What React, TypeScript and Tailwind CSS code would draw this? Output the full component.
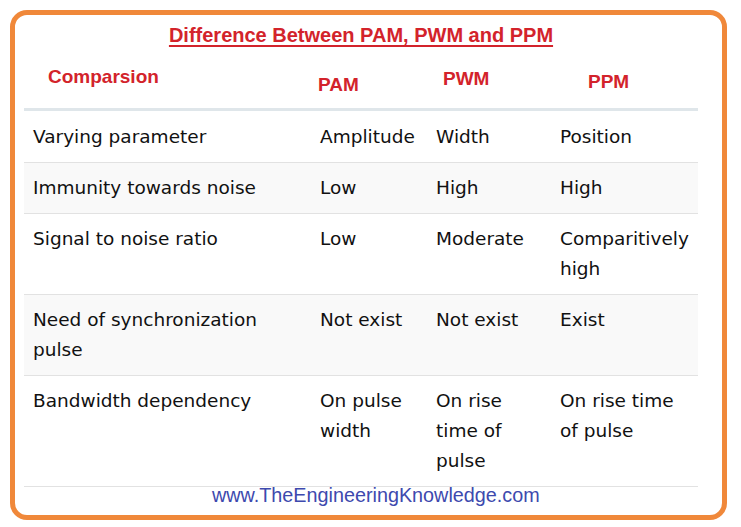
const rows = [
  { name: ['Varying parameter'], pam: ['Amplitude'], pwm: ['Width'], ppm: ['Position'] },
  { name: ['Immunity towards noise'], pam: ['Low'], pwm: ['High'], ppm: ['High'] },
  { name: ['Signal to noise ratio'], pam: ['Low'], pwm: ['Moderate'], ppm: ['Comparitively', 'high'] },
  { name: ['Need of synchronization', 'pulse'], pam: ['Not exist'], pwm: ['Not exist'], ppm: ['Exist'] },
  { name: ['Bandwidth dependency'], pam: ['On pulse', 'width'], pwm: ['On rise', 'time of', 'pulse'], ppm: ['On rise time', 'of pulse'] },
];

const Lines = ({ lines }: { lines: string[] }) => (
  <div className="px-[9px]">
    {lines.map((l, i) => (
      <div key={i} className="whitespace-nowrap">
        {l}
      </div>
    ))}
  </div>
);

export default function App() {
  return (
    <div className="w-[741px] h-[527px] bg-white pt-[10px] pl-[10px]">
      <div className="w-[717px] h-[510px] border-[5px] border-[#f0883a] rounded-[17px] pl-[9px]">
        <div className="w-[674px]">
          <div className="mt-[10px] flex justify-center font-['Liberation_Sans',Arial,sans-serif] font-bold text-[20px] leading-[20px] text-[#d3232b] underline decoration-2 underline-offset-[3px]">
            Difference Between PAM, PWM and PPM
          </div>

          <div className="grid grid-cols-[287px_116px_124px_147px] h-[66px] border-b-[3px] border-[#dfe6ea] font-['Liberation_Sans',Arial,sans-serif] font-bold text-[19px] leading-[20px] text-[#d3232b]">
            <div className="pt-[22px] pl-[24px]">Comparsion</div>
            <div className="pt-[30px] pl-[7px]">PAM</div>
            <div className="pt-[24px] pl-[16px]">PWM</div>
            <div className="pt-[27px] pl-[37px]">PPM</div>
          </div>

          <div className="font-['DejaVu_Sans',Verdana,sans-serif] text-[18.5px] leading-[30px] text-[#111]">
            {rows.map((r, i) => (
              <div
                key={i}
                className={`grid grid-cols-[287px_116px_124px_147px] border-b border-[#e2e2e2] pb-[10px] ${
                  i === 0 ? 'pt-[11px]' : 'pt-[10px]'
                } ${i % 2 === 1 ? 'bg-[#f9f9f9]' : 'bg-white'}`}
              >
                <Lines lines={r.name} />
                <Lines lines={r.pam} />
                <Lines lines={r.pwm} />
                <Lines lines={r.ppm} />
              </div>
            ))}
          </div>

          <div className="-mt-[2px] pl-[188px] font-['Liberation_Sans',Arial,sans-serif] text-[19.8px] leading-[20px] text-[#3d49ae]">
            www.TheEngineeringKnowledge.com
          </div>
        </div>
      </div>
    </div>
  );
}
